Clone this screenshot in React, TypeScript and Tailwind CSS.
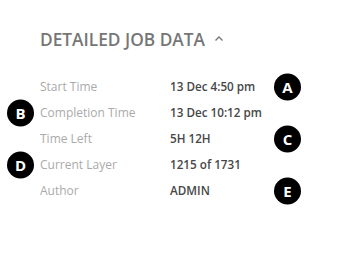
import React from 'react';

type Row = { label: string; value: string };

const rows: Row[] = [
  { label: 'Start Time', value: '13 Dec 4:50 pm' },
  { label: 'Completion Time', value: '13 Dec 10:12 pm' },
  { label: 'Time Left', value: '5H 12H' },
  { label: 'Current Layer', value: '1215 of 1731' },
  { label: 'Author', value: 'ADMIN' },
];

// callout badges: letter, side
const badges: Record<number, { letter: string; side: 'left' | 'right' }> = {
  0: { letter: 'A', side: 'right' },
  1: { letter: 'B', side: 'left' },
  2: { letter: 'C', side: 'right' },
  3: { letter: 'D', side: 'left' },
  4: { letter: 'E', side: 'right' },
};

const Badge: React.FC<{ letter: string; side: 'left' | 'right' }> = ({ letter, side }) => (
  <span
    className={`absolute top-1/2 -translate-y-1/2 w-[27px] h-[27px] rounded-full bg-black text-white flex items-center justify-center text-[15px] font-bold ${
      side === 'left' ? 'left-[7px]' : 'left-[274px]'
    }`}
  >
    {letter}
  </span>
);

export default function App() {
  return (
    <div className="w-[341px] h-[275px] bg-white font-['Open_Sans',sans-serif]">
      <div className="pt-[28px]">
        <h2 className="pl-[40px] flex items-center gap-[9px] text-[17.3px] leading-[24px] font-semibold text-[#767676]">
          DETAILED JOB DATA
          <svg width="10" height="7" viewBox="0 0 10 7" className="mt-[-3px]">
            <path d="M1.5 5.5 L5 2 L8.5 5.5" fill="none" stroke="#777" strokeWidth="1.4" />
          </svg>
        </h2>
        <div className="mt-[22px] flex flex-col">
          {rows.map((r, i) => (
            <div key={r.label} className="relative h-[26px] flex items-center pl-[40px]">
              {badges[i] && <Badge letter={badges[i].letter} side={badges[i].side} />}
              <span className="w-[130px] text-[12px] text-[#aaaaaa]">{r.label}</span>
              <span className="text-[11.7px] font-semibold text-[#474747]">{r.value}</span>
            </div>
          ))}
        </div>
      </div>
    </div>
  );
}
